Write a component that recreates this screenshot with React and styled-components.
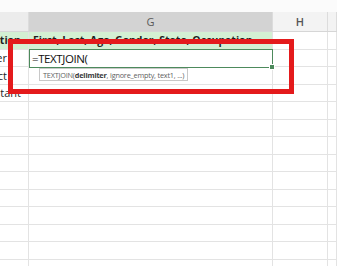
import React from "react";
import styled, { createGlobalStyle } from "styled-components";

const Global = createGlobalStyle`
  html, body { margin: 0; padding: 0; background: #ffffff; }
  body { font-family: "Liberation Sans", Arial, sans-serif; }
`;

const Sheet = styled.div`
  position: relative;
  width: 337px;
  height: 266px;
  overflow: hidden;
  background: #ffffff;
`;

const TopBand = styled.div`
  height: 12px;
  background: #fbfbfb;
`;

const HeaderRow = styled.div`
  display: flex;
  height: 20px;
  border-bottom: 1px solid #d6d6d6;
  box-sizing: border-box;
`;

const HeaderCell = styled.div`
  flex: ${(p) => (p.$w ? `0 0 ${p.$w}px` : "1 1 auto")};
  background: ${(p) => (p.$selected ? "#d3d3d3" : p.$corner ? "#ececec" : "#f3f3f3")};
  border-right: 1px solid #dcdcdc;
  box-sizing: border-box;
  display: flex;
  align-items: center;
  justify-content: center;
  font-family: "Open Sans", "Liberation Sans", sans-serif;
  font-size: 11px;
  color: ${(p) => (p.$selected ? "#595959" : "#555555")};
  font-weight: ${(p) => (p.$bold ? 600 : 400)};
`;

const Row = styled.div`
  display: flex;
  height: 17.5px;
`;

const Cell = styled.div`
  position: relative;
  flex: ${(p) => (p.$w ? `0 0 ${p.$w}px` : "1 1 auto")};
  box-sizing: border-box;
  border-right: 1px solid #e3e3e3;
  border-bottom: 1px solid #e3e3e3;
  background: ${(p) => (p.$green ? "#d3f0d3" : "#ffffff")};
  display: flex;
  align-items: center;
  overflow: hidden;
  white-space: nowrap;
  font-family: "Open Sans", "Liberation Sans", sans-serif;
  font-size: ${(p) => (p.$bold ? "10.5px" : "11px")};
  color: #1f1f1f;
  justify-content: ${(p) => (p.$end !== undefined ? "flex-end" : "flex-start")};
  padding-right: ${(p) => (p.$end !== undefined ? `${p.$end}px` : "0")};
  padding-left: ${(p) => (p.$pad ? `${p.$pad}px` : "0")};
  font-weight: ${(p) => (p.$bold ? 700 : 400)};
`;

const ActiveCell = styled.div`
  position: relative;
  z-index: 2;
  flex: 0 0 244px;
  box-sizing: border-box;
  border: 1.5px solid #4d8a5c;
  margin-top: -0.5px;
  height: 19px;
  background: #ffffff;
  display: flex;
  align-items: center;
  padding-left: 2px;
  font-family: "Open Sans", "Liberation Sans", sans-serif;
  font-size: 11.5px;
  letter-spacing: -0.4px;
  color: #111111;
`;

const FillHandle = styled.div`
  position: absolute;
  right: -3px;
  bottom: -3px;
  width: 4px;
  height: 4px;
  background: #4d8a5c;
  border: 1px solid #ffffff;
`;

const Tooltip = styled.div`
  position: absolute;
  z-index: 3;
  left: 39px;
  top: 68px;
  height: 13px;
  padding: 0 3px;
  box-sizing: border-box;
  border: 1px solid #c8c8c8;
  background: #ffffff;
  display: flex;
  align-items: center;
  font-family: "Open Sans", "Liberation Sans", sans-serif;
  font-size: 7.3px;
  letter-spacing: -0.2px;
  color: #5e5e5e;
  white-space: nowrap;
  b { color: #3a3a3a; font-weight: 700; }
`;

const RedFrame = styled.div`
  position: absolute;
  z-index: 4;
  left: 8px;
  top: 39px;
  width: 286px;
  height: 55px;
  box-sizing: border-box;
  border: 5px solid #e41a1c;
  pointer-events: none;
`;

const COLS = [29, 244, 55];

export default function App() {
  const emptyRows = Array.from({ length: 10 });
  return (
    <>
      <Global />
      <Sheet>
        <TopBand />
        <HeaderRow>
          <HeaderCell $w={COLS[0]} $corner />
          <HeaderCell $w={COLS[1]} $selected>G</HeaderCell>
          <HeaderCell $w={COLS[2]} $bold>H</HeaderCell>
          <HeaderCell />
        </HeaderRow>
        <Row>
          <Cell $w={COLS[0]} $green $bold $end={7}>Occupation</Cell>
          <Cell $w={COLS[1]} $green $bold $pad={4}>First, Last, Age, Gender, State, Occupation</Cell>
          <Cell $w={COLS[2]} />
          <Cell />
        </Row>
        <Row>
          <Cell $w={COLS[0]} $end={21}>Engineer</Cell>
          <ActiveCell>
            =TEXTJOIN(
            <FillHandle />
          </ActiveCell>
          <Cell $w={COLS[2]} />
          <Cell />
        </Row>
        <Row>
          <Cell $w={COLS[0]} $end={21}>Architect</Cell>
          <Cell $w={COLS[1]} />
          <Cell $w={COLS[2]} />
          <Cell />
        </Row>
        <Row>
          <Cell $w={COLS[0]} $end={7}>Accountant</Cell>
          <Cell $w={COLS[1]} />
          <Cell $w={COLS[2]} />
          <Cell />
        </Row>
        {emptyRows.map((_, i) => (
          <Row key={i}>
            <Cell $w={COLS[0]} />
            <Cell $w={COLS[1]} />
            <Cell $w={COLS[2]} />
            <Cell />
          </Row>
        ))}
        <Tooltip>
          TEXTJOIN(<b>delimiter</b>, ignore_empty, text1, ...)
        </Tooltip>
        <RedFrame />
      </Sheet>
    </>
  );
}
